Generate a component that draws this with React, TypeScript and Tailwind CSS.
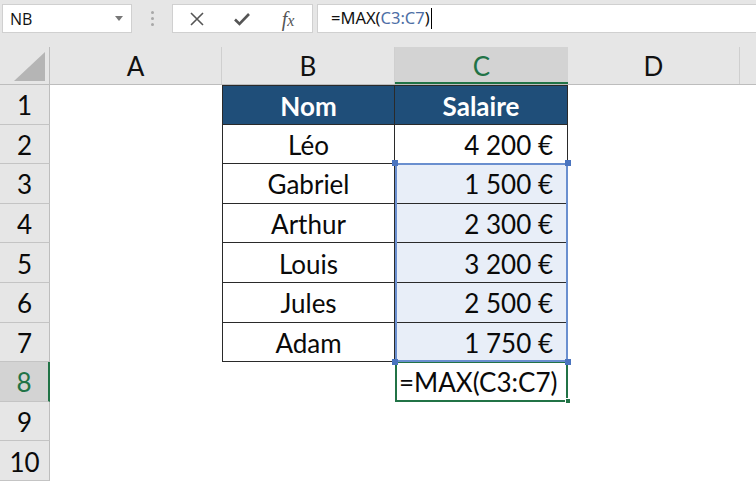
import React from 'react';

const ROWS = [
  { n: 1, b: 'Nom', c: 'Salaire', head: true },
  { n: 2, b: 'Léo', c: '4 200 €' },
  { n: 3, b: 'Gabriel', c: '1 500 €', sel: true },
  { n: 4, b: 'Arthur', c: '2 300 €', sel: true },
  { n: 5, b: 'Louis', c: '3 200 €', sel: true },
  { n: 6, b: 'Jules', c: '2 500 €', sel: true },
  { n: 7, b: 'Adam', c: '1 750 €', sel: true },
  { n: 8 },
  { n: 9 },
  { n: 10 },
];

const cellFont = { fontFamily: 'Lato, "Noto Sans", sans-serif' };
const uiFont = { fontFamily: '"Open Sans", "Noto Sans", sans-serif' };

const Toolbar = () => (
  <div className="h-[47px] bg-[#e6e6e6] flex items-start pt-[4px] pl-[2px]" style={uiFont}>
    <div className="w-[130px] h-[29px] bg-white border border-[#d0d0d0] flex items-center justify-between pl-[7px] pr-[8px]">
      <span className="text-[16px] text-[#111]">NB</span>
      <svg width="8" height="5" viewBox="0 0 8 5"><path d="M0 0h8L4 5z" fill="#777" /></svg>
    </div>
    <div className="w-[40px] h-[29px] flex flex-col items-center justify-center gap-[3px]">
      <span className="w-[3px] h-[3px] rounded-full bg-[#a8a8a8]" />
      <span className="w-[3px] h-[3px] rounded-full bg-[#a8a8a8]" />
      <span className="w-[3px] h-[3px] rounded-full bg-[#a8a8a8]" />
    </div>
    <div className="w-[141px] h-[29px] bg-white border border-[#d0d0d0] flex items-center">
      <div className="w-[46px] flex justify-center pl-[2px]">
        <svg width="16" height="16" viewBox="0 0 16 16">
          <path d="M2 2L14 14M14 2L2 14" stroke="#555" strokeWidth="1.6" />
        </svg>
      </div>
      <div className="w-[46px] flex justify-center">
        <svg width="18" height="16" viewBox="0 0 18 16">
          <path d="M2 8.5L6.5 13L16 3" stroke="#555" strokeWidth="2.6" fill="none" />
        </svg>
      </div>
      <div className="w-[46px] flex justify-center">
        <span className="text-[20px] italic text-[#555]" style={{ fontFamily: '"Liberation Serif", serif' }}>
          f<span className="text-[16px]">x</span>
        </span>
      </div>
    </div>
    <div className="ml-[4px] flex-1 h-[29px] bg-white border border-[#d0d0d0] border-r-0 flex items-center pl-[13px]">
      <span className="text-[16.5px] text-[#111]" style={{ fontFamily: '"Noto Sans", sans-serif' }}>
        =MAX(<span className="text-[#4e6fa6]">C3:C7</span>)
      </span>
      <span className="w-px h-[21px] bg-black ml-[1px]" />
    </div>
  </div>
);

const ColHeader = () => (
  <div className="flex h-[38px] bg-[#e6e6e6] border-b border-[#bdbdbd] text-[26px] text-[#111]" style={cellFont}>
    <div className="w-[50px] border-r border-[#bdbdbd] relative">
      <svg className="absolute right-[4px] bottom-[3px]" width="31" height="29" viewBox="0 0 31 29">
        <path d="M31 0V29H0z" fill="#b5b5b5" />
      </svg>
    </div>
    <div className="w-[172px] border-r border-[#cfcfcf] flex items-center justify-center pt-[2px]">A</div>
    <div className="w-[173px] border-r border-[#cfcfcf] flex items-center justify-center pt-[2px]">B</div>
    <div className="w-[173px] bg-[#d3d3d3] border-b-2 border-[#217346] flex items-center justify-center pt-[3px] text-[#217346]">C</div>
    <div className="w-[172px] border-r border-[#cfcfcf] flex items-center justify-center pt-[2px]">D</div>
    <div className="flex-1" />
  </div>
);

export default function App() {
  return (
    <div className="w-[756px] h-[485px] overflow-hidden bg-white">
      <Toolbar />
      <ColHeader />
      <div className="relative" style={cellFont}>
        {ROWS.map((r) => {
          const active = r.n === 8;
          const inTable = r.n <= 7;
          return (
            <div key={r.n} className="flex h-[39.6px] text-[26px] text-[#0a0a0a]">
              <div
                className={
                  active
                    ? 'w-[50px] bg-[#d3d3d3] border-b border-[#c4c4c4] border-r-2 border-r-[#217346] text-[#217346] flex items-center justify-center pt-[3px]'
                    : 'w-[50px] bg-[#e6e6e6] border-b border-[#c4c4c4] border-r border-r-[#bdbdbd] flex items-center justify-center pt-[3px]'
                }
              >
                {r.n}
              </div>
              <div className="w-[172px]" />
              {inTable ? (
                <>
                  <div
                    className={
                      r.head
                        ? 'w-[173px] bg-[#1f4e79] border border-[#2a2a2a] text-white font-bold flex items-center justify-center pt-[3px]'
                        : 'w-[173px] border-x border-b border-[#2a2a2a] flex items-center justify-center pt-[3px]'
                    }
                  >
                    {r.b}
                  </div>
                  <div
                    className={
                      r.head
                        ? 'w-[173px] bg-[#1f4e79] border-y border-r border-[#2a2a2a] text-white font-bold flex items-center justify-center pt-[3px]'
                        : r.sel
                        ? 'w-[173px] bg-[#e8eef8] border-r border-b border-[#2a2a2a] flex items-center justify-end pr-[14px] pt-[3px]'
                        : 'w-[173px] border-r border-b border-[#2a2a2a] flex items-center justify-end pr-[14px] pt-[3px]'
                    }
                  >
                    {r.c}
                  </div>
                </>
              ) : (
                <>
                  <div className="w-[173px]" />
                  <div
                    className={
                      active
                        ? 'w-[173px] border-2 border-[#217346] flex items-center pl-[2px] pt-[2px] -mt-px whitespace-nowrap'
                        : 'w-[173px]'
                    }
                  >
                    {active ? '=MAX(C3:C7)' : ''}
                  </div>
                </>
              )}
              <div className="flex-1" />
            </div>
          );
        })}
        {/* reference range highlight C3:C7 */}
        <div className="absolute left-[395px] top-[78px] w-[173px] h-[199px] border-2 border-[#6a8fcf] pointer-events-none" />
        <span className="absolute left-[392px] top-[75px] w-[6px] h-[6px] bg-[#4a74bf]" />
        <span className="absolute left-[565px] top-[75px] w-[6px] h-[6px] bg-[#4a74bf]" />
        <span className="absolute left-[392px] top-[274px] w-[6px] h-[6px] bg-[#4a74bf]" />
        <span className="absolute left-[565px] top-[274px] w-[6px] h-[6px] bg-[#4a74bf]" />
        {/* fill handle */}
        <span className="absolute left-[565px] top-[313px] w-[6px] h-[6px] bg-[#217346] border border-white" />
      </div>
    </div>
  );
}
